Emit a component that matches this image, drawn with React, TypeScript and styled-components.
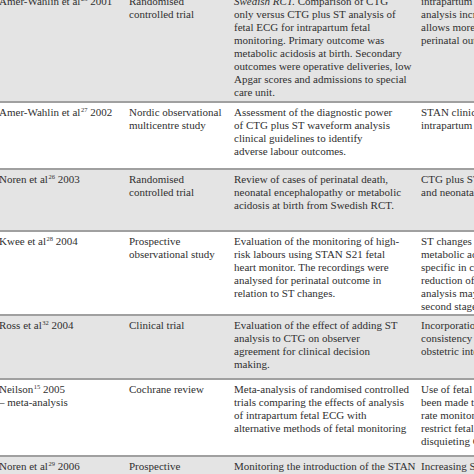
import * as React from "react";
import styled, { createGlobalStyle } from "styled-components";

const GlobalStyle = createGlobalStyle`
  html, body {
    margin: 0;
    padding: 0;
    background: #ffffff;
    overflow: hidden;
  }
  body {
    width: 474px;
    height: 474px;
    font-family: "Liberation Serif", "Times New Roman", serif;
  }
`;

const Table = styled.div`
  margin-top: -8px;
  margin-left: -1px;
  width: 640px;
  display: flex;
  flex-direction: column;
`;

const Row = styled.div<{ $shaded: boolean; $height: number }>`
  display: grid;
  grid-template-columns: 130px 105px 187px 218px;
  box-sizing: border-box;
  height: ${({ $height }) => $height}px;
  padding-top: 3px;
  background: ${({ $shaded }) => ($shaded ? "#e4e4e4" : "#ffffff")};
  border-bottom: 2px solid #a0a0a0;
`;

const Cell = styled.div`
  display: flex;
  flex-direction: column;
  font-size: 11px;
  line-height: 13px;
  color: #303030;
  white-space: nowrap;
`;

const Line = styled.span`
  display: block;
`;

const Ref = styled.sup`
  font-size: 6.5px;
  line-height: 0;
  vertical-align: 4px;
  margin-left: 0.5px;
`;

type Study = {
  author: string;
  ref: string;
  year: string;
  authorExtra?: string;
  design: string[];
  aim: string[];
  italicLead?: string;
  finding: string[];
  height: number;
};

const studies: Study[] = [
  {
    author: "Amer-Wahlin et al",
    ref: "25",
    year: "2001",
    design: ["Randomised", "controlled trial"],
    italicLead: "Swedish RCT.",
    aim: [
      " Comparison of CTG",
      "only versus CTG plus ST analysis of",
      "fetal ECG for intrapartum fetal",
      "monitoring. Primary outcome was",
      "metabolic acidosis at birth. Secondary",
      "outcomes were operative deliveries, low",
      "Apgar scores and admissions to special",
      "care unit.",
    ],
    finding: [
      "intrapartum fetal ECG",
      "analysis increases the",
      "allows more accurate",
      "perinatal outcome",
    ],
    height: 111,
  },
  {
    author: "Amer-Wahlin et al",
    ref: "27",
    year: "2002",
    design: ["Nordic observational", "multicentre study"],
    aim: [
      "Assessment of the diagnostic power",
      "of CTG plus ST waveform analysis",
      "clinical guidelines to identify",
      "adverse labour outcomes.",
    ],
    finding: ["STAN clinical guidelines", "intrapartum monitoring"],
    height: 67,
  },
  {
    author: "Noren et al",
    ref: "26",
    year: "2003",
    design: ["Randomised", "controlled trial"],
    aim: [
      "Review of cases of perinatal death,",
      "neonatal encephalopathy or metabolic",
      "acidosis at birth from Swedish RCT.",
    ],
    finding: ["CTG plus ST analysis", "and neonatal outcome"],
    height: 62,
  },
  {
    author: "Kwee et al",
    ref: "28",
    year: "2004",
    design: ["Prospective", "observational study"],
    aim: [
      "Evaluation of the monitoring of high-",
      "risk labours using STAN S21 fetal",
      "heart monitor. The recordings were",
      "analysed for perinatal outcome in",
      "relation to ST changes.",
    ],
    finding: [
      "ST changes were related",
      "metabolic acidosis",
      "specific in combination",
      "reduction of false",
      "analysis may be",
      "second stage of labour",
    ],
    height: 84,
  },
  {
    author: "Ross et al",
    ref: "32",
    year: "2004",
    design: ["Clinical trial"],
    aim: [
      "Evaluation of the effect of adding ST",
      "analysis to CTG on observer",
      "agreement for clinical decision",
      "making.",
    ],
    finding: ["Incorporation of ST", "consistency of", "obstetric interventions"],
    height: 64,
  },
  {
    author: "Neilson",
    ref: "15",
    year: "2005",
    authorExtra: "– meta-analysis",
    design: ["Cochrane review"],
    aim: [
      "Meta-analysis of randomised controlled",
      "trials comparing the effects of analysis",
      "of intrapartum fetal ECG with",
      "alternative methods of fetal monitoring",
    ],
    finding: [
      "Use of fetal ECG has",
      "been made to fetal heart",
      "rate monitoring to",
      "restrict fetal blood",
      "disquieting CTG",
    ],
    height: 77,
  },
  {
    author: "Noren et al",
    ref: "29",
    year: "2006",
    design: ["Prospective"],
    aim: ["Monitoring the introduction of the STAN"],
    finding: ["Increasing STAN use"],
    height: 80,
  },
];

function StudyRow({ study, shaded }: { study: Study; shaded: boolean }) {
  return (
    <Row $shaded={shaded} $height={study.height}>
      <Cell>
        <Line>
          {study.author}
          <Ref>{study.ref}</Ref> {study.year}
        </Line>
        {study.authorExtra && <Line>{study.authorExtra}</Line>}
      </Cell>
      <Cell>
        {study.design.map((l, i) => (
          <Line key={i}>{l}</Line>
        ))}
      </Cell>
      <Cell>
        {study.aim.map((l, i) => (
          <Line key={i}>
            {i === 0 && study.italicLead && <i>{study.italicLead}</i>}
            {l}
          </Line>
        ))}
      </Cell>
      <Cell>
        {study.finding.map((l, i) => (
          <Line key={i}>{l}</Line>
        ))}
      </Cell>
    </Row>
  );
}

export default function App() {
  return (
    <>
      <GlobalStyle />
      <Table>
        {studies.map((s, i) => (
          <StudyRow key={i} study={s} shaded={i % 2 === 0} />
        ))}
      </Table>
    </>
  );
}
